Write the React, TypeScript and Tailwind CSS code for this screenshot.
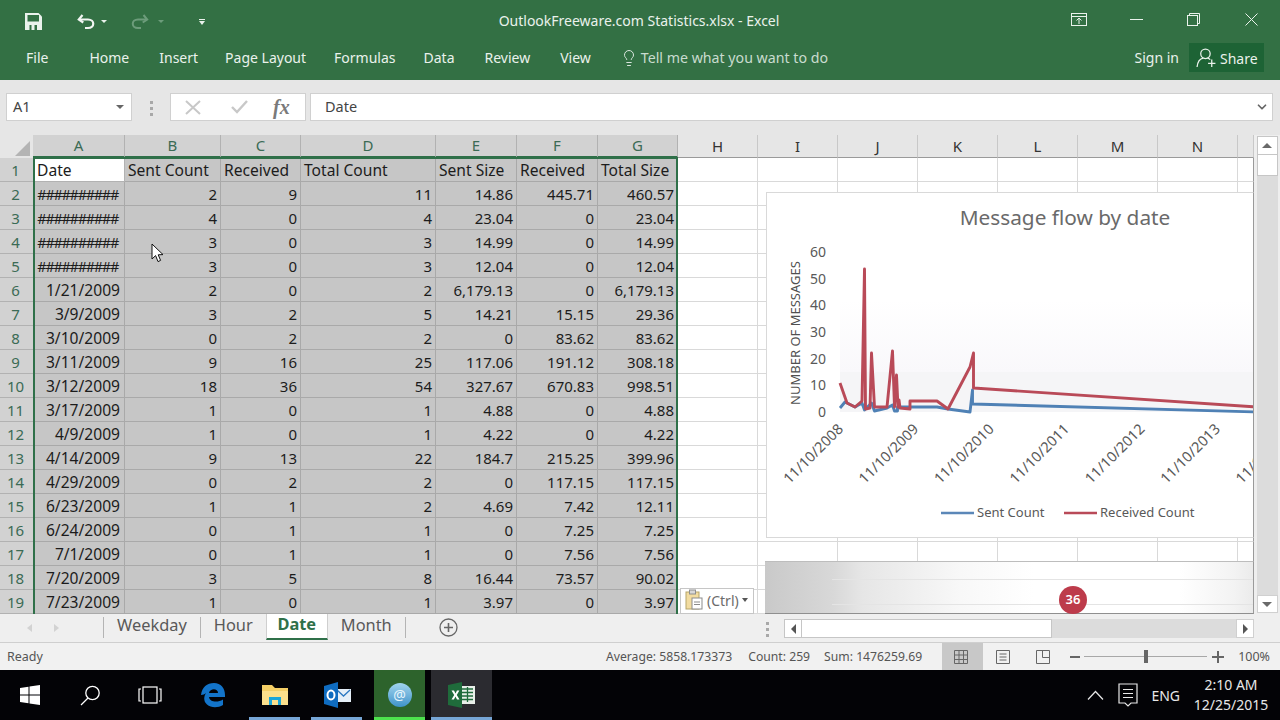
import React from "react";
import { ChevronDown, Lightbulb } from "lucide-react";

const widths = [92, 96, 80, 135, 81, 81, 80, 80, 80, 80, 80, 80, 80, 80, 16];
const letters = ["A", "B", "C", "D", "E", "F", "G", "H", "I", "J", "K", "L", "M", "N", ""];
const H = "##########";
const rows: string[][] = [
  ["Date", "Sent Count", "Received", "Total Count", "Sent Size", "Received", "Total Size"],
  [H, "2", "9", "11", "14.86", "445.71", "460.57"],
  [H, "4", "0", "4", "23.04", "0", "23.04"],
  [H, "3", "0", "3", "14.99", "0", "14.99"],
  [H, "3", "0", "3", "12.04", "0", "12.04"],
  ["1/21/2009", "2", "0", "2", "6,179.13", "0", "6,179.13"],
  ["3/9/2009", "3", "2", "5", "14.21", "15.15", "29.36"],
  ["3/10/2009", "0", "2", "2", "0", "83.62", "83.62"],
  ["3/11/2009", "9", "16", "25", "117.06", "191.12", "308.18"],
  ["3/12/2009", "18", "36", "54", "327.67", "670.83", "998.51"],
  ["3/17/2009", "1", "0", "1", "4.88", "0", "4.88"],
  ["4/9/2009", "1", "0", "1", "4.22", "0", "4.22"],
  ["4/14/2009", "9", "13", "22", "184.7", "215.25", "399.96"],
  ["4/29/2009", "0", "2", "2", "0", "117.15", "117.15"],
  ["6/23/2009", "1", "1", "2", "4.69", "7.42", "12.11"],
  ["6/24/2009", "0", "1", "1", "0", "7.25", "7.25"],
  ["7/1/2009", "0", "1", "1", "0", "7.56", "7.56"],
  ["7/20/2009", "3", "5", "8", "16.44", "73.57", "90.02"],
  ["7/23/2009", "1", "0", "1", "3.97", "0", "3.97"],
];

const red = "840,383 847,403 855,407 862,401 864.5,269 865.5,409 870,408 871.5,353 874.5,407 887,407 892.5,351 894.5,407 896.5,375 898,407 899,400 900,408 910,409 910,401 937,401 948,409 970,367 973.5,353 973.5,388 1256,407";
const blue = "840,408 845,402 855,407 862,403 864.5,410 871.5,403 874.5,411 887,408 892.5,405 894.5,411 897.5,411 897.5,407 910,407 937,407 948,409 970,412 972.5,390 972.5,404 1256,412";

function Header() {
  return (
    <div className="flex h-[23px] bg-[#e6e6e6]">
      <div className="w-[33px] shrink-0 flex items-end justify-end pr-[3px] pb-[2px] bg-[#e6e6e6]">
        <div className="w-[15px] h-[15px] bg-[#b4b4b4] [clip-path:polygon(100%_0,100%_100%,0_100%)]" />
      </div>
      {letters.map((l, i) => (
        <div
          key={i}
          style={{ width: widths[i] }}
          className={`shrink-0 flex items-center justify-center text-[15px] border-r ${
            i < 7 ? "bg-[#d2d2d2] border-[#b2b2b2] text-[#3b6b55] border-b-2 border-b-[#2f7049]" : "border-[#c8c8c8] border-b border-b-[#9a9a9a] text-[#333333]"
          }`}
        >
          {l}
        </div>
      ))}
    </div>
  );
}

function Row({ index, data }: { index: number; data: string[] }) {
  return (
    <div className="flex h-6">
      <div className="w-[33px] shrink-0 bg-[#d2d2d2] border-b border-[#b2b2b2] text-[#3b6b55] text-[15px] flex items-center justify-center pr-[2px] pt-px">
        {index + 1}
      </div>
      {widths.map((w, i) => {
        const sel = i < 7;
        const v = data[i];
        const left = index === 0;
        const big = left || i === 0;
        return (
          <div
            key={i}
            style={{ width: w }}
            className={`shrink-0 flex items-center overflow-hidden whitespace-nowrap text-[#1c1c1c] border-r border-b ${
              big ? "text-[15.6px] pt-[2px]" : "text-[15px] pt-px"
            } ${left ? "justify-start pl-[3px]" : i === 0 ? "justify-end pr-[4px]" : "justify-end pr-[3px]"} ${
              sel
                ? index === 0 && i === 0
                  ? "bg-white border-[#b2b2b2] pl-[4px]"
                  : "bg-[#c6c6c6] border-[#a9a9a9]"
                : i === 14
                  ? "bg-white border-b-[#d9d9d9] border-r-[#9a9a9a]"
                  : "bg-white border-[#d9d9d9]"
            }`}
          >
            {v === H ? <span className="text-[14.5px] tracking-[-1.3px] pr-[2px]">{v}</span> : v}
          </div>
        );
      })}
    </div>
  );
}

function Chart() {
  const xLabels = [0, 1, 2, 3, 4, 5, 6];
  return (
    <div className="absolute left-[766px] top-[57px] w-[488px] h-[346px] bg-white border border-[#d9d9d9] border-r-[#9a9a9a] overflow-hidden">
      <svg viewBox="767 193 487 344" className="block w-[487px] h-[344px]">
        <defs>
          <linearGradient id="fade" x1="0" y1="0" x2="0" y2="1">
            <stop offset="0" stopColor="#ffffff" />
            <stop offset="1" stopColor="#f9f8fb" />
          </linearGradient>
        </defs>
        <rect x="840" y="300" width="414" height="72" fill="url(#fade)" />
        <rect x="840" y="372" width="414" height="40" fill="#f5f5f7" />
        <text x="1065" y="225" textAnchor="middle" fontSize="20.8" fill="#6a6a6a">Message flow by date</text>
        <text transform="translate(800 333) rotate(-90)" textAnchor="middle" fontSize="13" fill="#505050">NUMBER OF MESSAGES</text>
        {[60, 50, 40, 30, 20, 10, 0].map((v, i) => (
          <text key={v} x="826" y={257 + i * 26.67} textAnchor="end" fontSize="14" fill="#595959">{v}</text>
        ))}
        <polyline points={blue} fill="none" stroke="#4f81b5" strokeWidth="2.9" strokeLinejoin="round" />
        <polyline points={red} fill="none" stroke="#b94a58" strokeWidth="2.9" strokeLinejoin="round" />
        {xLabels.map((i) => (
          <text
            key={i}
            transform={`translate(${844 + i * 75.4} 430) rotate(-45)`}
            textAnchor="end"
            fontSize="14.5"
            fill="#595959"
          >
            11/10/{2008 + i}
          </text>
        ))}
        <line x1="941" y1="513" x2="974" y2="513" stroke="#5b87b8" strokeWidth="2.5" />
        <text x="977" y="517" fontSize="13" fill="#595959">Sent Count</text>
        <line x1="1064" y1="513" x2="1097" y2="513" stroke="#b94a58" strokeWidth="2.5" />
        <text x="1100" y="517" fontSize="13" fill="#595959">Received Count</text>
      </svg>
    </div>
  );
}

function Cursor() {
  return (
    <svg className="absolute left-[151px] top-[108px]" width="14" height="21" viewBox="0 0 14 21">
      <path d="M1 1 L1 16 L4.6 12.6 L7 18.6 L9.6 17.4 L7.2 11.8 L12 11.6 Z" fill="#ffffff" stroke="#111111" strokeWidth="1" />
    </svg>
  );
}

function Grid() {
  return (
    <div className="relative h-[479px] w-[1254px] shrink-0 overflow-hidden bg-white">
      <Header />
      {rows.map((r, i) => (
        <Row key={i} index={i} data={r} />
      ))}
      <div className="absolute left-[33px] top-[22px] w-[645px] h-[460px] border-2 border-[#2f7049]" />
      <Cursor />
      <Chart />
      <div className="absolute left-[765px] top-[426px] w-[489px] h-[53px] border-t border-b border-r border-t-[#bdbdbd] border-b-[#8f8f8f] border-r-[#9a9a9a] bg-[linear-gradient(90deg,#c9c9c9_0%,#d8d8d8_14%,#e6e6e6_20%,#f8f8f8_40%,#ffffff_55%,#ffffff_85%,#f3f3f3_96%,#ebebeb_100%)] overflow-hidden">
        <div className="mt-[17px] h-[26px] ml-[67px] border-t border-b border-[#e4e4e4]" />
      </div>
      <div className="absolute left-[1059px] top-[451px] w-7 h-7 rounded-full bg-[#bd3b4b] text-white text-[13px] font-semibold flex items-center justify-center">36</div>
      <div className="absolute left-[680px] top-[453px] w-[74px] h-[26px] bg-white border border-[#c6c6c6] flex items-center pl-[4px] pb-[2px] text-[#6b6b6b] text-[14px] whitespace-nowrap">
        <svg width="19" height="22" viewBox="0 0 19 22" className="shrink-0">
          <rect x="1" y="3" width="13" height="17" fill="#f2dca0" stroke="#b5a56a" />
          <rect x="4.5" y="1" width="6" height="4" fill="#d7d7d7" stroke="#8e8e8e" />
          <rect x="7" y="9" width="10" height="11" fill="#ffffff" stroke="#8b8b8b" />
          <path d="M9 13h6M9 15.5h6" stroke="#8b8b8b" />
        </svg>
        <span className="ml-[3px]">(Ctrl)</span>
        <span className="ml-[3px] border-x-[3px] border-x-transparent border-t-[4px] border-t-[#555555]" />
      </div>
    </div>
  );
}

function VScroll() {
  return (
    <div className="w-[26px] h-[479px] bg-[#eeeeee] flex flex-col items-center pt-px">
      <div className="w-[21px] h-[19px] bg-white border border-[#c6c6c6] flex items-center justify-center">
        <span className="border-x-[5px] border-x-transparent border-b-[5px] border-b-[#6a6a6a]" />
      </div>
      <div className="w-[21px] h-[21px] bg-white border border-t-0 border-[#c6c6c6]" />
      <div className="w-[21px] flex-1 bg-[#dcdcdc]" />
      <div className="w-[21px] h-[18px] mb-px bg-white border border-[#d0d0d0] flex items-center justify-center">
        <span className="border-x-[5px] border-x-transparent border-t-[5px] border-t-[#6a6a6a]" />
      </div>
    </div>
  );
}

function TitleBar() {
  return (
    <div className="h-[80px] bg-[#337044] text-[#eaf2ec] shrink-0">
      <div className="relative h-[43px] flex items-center">
        <svg className="ml-[25px] shrink-0" width="17" height="17" viewBox="0 0 17 17">
          <path d="M0 0h13.500L17 3.500V17H0Z" fill="#eaf2ec" />
          <rect x="2.500" y="2" width="11.500" height="6.500" fill="#337044" />
          <rect x="4.500" y="12" width="2" height="5" fill="#337044" />
          <rect x="9.500" y="12" width="2.500" height="5" fill="#337044" />
        </svg>
        <svg className="ml-[35px] shrink-0" width="19" height="17" viewBox="0 0 19 17">
          <path d="M5.5 2 1.8 6.5l4.5 3" fill="none" stroke="#f2f6f3" strokeWidth="2.2" />
          <path d="M2.5 6.5H11c7 0 7 8.500 0 8.500H8" fill="none" stroke="#f2f6f3" strokeWidth="2.2" />
        </svg>
        <span className="ml-[5px] border-x-[3px] border-x-transparent border-t-[3px] border-t-[#eaf2ec]" />
        <svg className="ml-[23px] shrink-0" width="19" height="17" viewBox="0 0 19 17">
          <path d="M13.500 2l3.700 4.500-4.500 3" fill="none" stroke="#6d9c7b" strokeWidth="2" />
          <path d="M16.500 6.500H8c-7 0-7 8.500 0 8.500h3" fill="none" stroke="#6d9c7b" strokeWidth="2" />
        </svg>
        <span className="ml-[9px] border-x-[3px] border-x-transparent border-t-[3px] border-t-[#6d9c7b]" />
        <div className="ml-[35px] flex flex-col items-center gap-px">
          <span className="w-[6px] h-px bg-[#eaf2ec]" />
          <span className="border-x-[3px] border-x-transparent border-t-[4px] border-t-[#eaf2ec]" />
        </div>
        <div className="absolute left-0 right-0 top-[10px] text-center text-[14px] leading-[22px] pointer-events-none pr-[2px]">
          OutlookFreeware.com Statistics.xlsx - Excel
        </div>
        <div className="ml-auto flex items-center mb-[4px]">
          <svg className="ml-[1px]" width="16" height="13" viewBox="0 0 16 13" fill="none" stroke="#eaf2ec">
            <rect x=".5" y=".5" width="15" height="12" />
            <path d="M.5 3.500h15M8 11V5M5.500 7.500 8 5l2.500 2.500" />
          </svg>
          <span className="ml-[43px] w-[13px] h-px bg-[#eaf2ec]" />
          <svg className="ml-[44px]" width="13" height="13" viewBox="0 0 13 13" fill="none" stroke="#eaf2ec">
            <rect x=".5" y="2.500" width="10" height="10" />
            <path d="M2.500 2.500V.5h10v10h-2" />
          </svg>
          <svg className="ml-[45px] mr-[22px]" width="13" height="13" viewBox="0 0 13 13" fill="none" stroke="#eaf2ec">
            <path d="M.5.5l12 12M12.500.5l-12 12" />
          </svg>
        </div>
      </div>
      <div className="h-[29px] flex items-center text-[14px] whitespace-nowrap">
        <span className="ml-[26px]">File</span>
        <span className="ml-[41px]">Home</span>
        <span className="ml-[30px]">Insert</span>
        <span className="ml-[27px]">Page Layout</span>
        <span className="ml-[28px]">Formulas</span>
        <span className="ml-[28px]">Data</span>
        <span className="ml-[30px]">Review</span>
        <span className="ml-[30px]">View</span>
        <Lightbulb className="ml-[29px] shrink-0 text-[#dfe9e2]" size={18} strokeWidth={1.3} />
        <span className="ml-[3px] text-[#c9dccf] text-[14.2px]">Tell me what you want to do</span>
        <span className="ml-auto">Sign in</span>
        <div className="ml-[10px] mr-[16px] w-[75px] h-[29px] bg-[#1d6335] flex items-center pl-[7px]">
          <svg width="21" height="21" viewBox="0 0 20 20" fill="none" stroke="#eaf2ec" strokeWidth="1.2" className="shrink-0">
            <circle cx="9" cy="6.500" r="4.500" />
            <path d="M1 19c.5-5 3-8 6-8.500M11 10.500c1 .3 2 .8 2.500 1.500M15 12v7M11.500 15.500h7" />
          </svg>
          <span className="ml-[3px] mt-[2px]">Share</span>
        </div>
      </div>
    </div>
  );
}

function FormulaBar() {
  return (
    <div className="h-[55px] bg-[#e6e6e6] flex items-start pt-[13px] shrink-0">
      <div className="ml-[6px] w-[126px] h-[28px] bg-white border border-[#d0d0d0] flex items-center pl-[6px] pr-[7px] text-[14.500px] text-[#444444]">
        A1
        <span className="ml-auto border-x-[4px] border-x-transparent border-t-[4px] border-t-[#666666]" />
      </div>
      <div className="ml-[18px] mt-[8px] flex flex-col gap-[3px]">
        {[0, 1, 2].map((i) => (
          <span key={i} className="w-[3px] h-[3px] bg-[#a8a8a8]" />
        ))}
      </div>
      <div className="ml-[17px] w-[136px] h-[28px] bg-white border border-[#d0d0d0] flex items-center">
        <svg className="ml-[14px]" width="16" height="15" viewBox="0 0 16 15" fill="none" stroke="#c8c8c8" strokeWidth="2">
          <path d="M1 1l14 13M15 1 1 14" />
        </svg>
        <svg className="ml-[30px]" width="17" height="14" viewBox="0 0 17 14" fill="none" stroke="#c8c8c8" strokeWidth="2.400">
          <path d="M1 7l5 5L16 1" />
        </svg>
        <span className="ml-[25px] font-['Liberation_Serif',serif] italic font-bold text-[20px] text-[#7a7a7a] leading-none">fx</span>
      </div>
      <div className="ml-[4px] w-[963px] h-[28px] bg-white border border-[#d0d0d0] flex items-center pl-[14px] pr-[3px] text-[14.500px] text-[#444444]">
        Date
        <ChevronDown className="ml-auto text-[#666666]" size={14} strokeWidth={3} />
      </div>
    </div>
  );
}

function TabsBar() {
  const tab = "h-[26px] px-[13px] pb-[4px] flex items-center text-[16.400px] text-[#595959]";
  const sep = "w-px h-[21px] bg-[#b4b4b4]";
  return (
    <div className="h-[29px] bg-[#efefef] border-b border-[#cfcfcf] flex items-start shrink-0">
      <span className="ml-[27px] mt-[10px] border-y-[4px] border-y-transparent border-r-[5px] border-r-[#d2d2d2]" />
      <span className="ml-[22px] mt-[10px] border-y-[4px] border-y-transparent border-l-[5px] border-l-[#d2d2d2]" />
      <span className={`ml-[44px] mt-[3px] ${sep}`} />
      <div className={tab}>Weekday</div>
      <span className={`mt-[3px] ${sep}`} />
      <div className={tab}>Hour</div>
      <div className="h-[26px] w-[62px] pb-[3px] bg-white border-x border-b-2 border-[#cfcfcf] border-b-[#2f7049] flex items-center justify-center text-[16.400px] font-bold text-[#2f7049]">Date</div>
      <div className={tab}>Month</div>
      <span className={`mt-[3px] ${sep}`} />
      <svg className="ml-[33px] mt-[4px] shrink-0" width="19" height="19" viewBox="0 0 19 19" fill="none" stroke="#666666" strokeWidth="1.300">
        <circle cx="9.500" cy="9.500" r="8.500" />
        <path d="M9.500 5v9M5 9.500h9" strokeWidth="1.600" />
      </svg>
      <div className="ml-auto flex items-start">
        <div className="mt-[8px] mr-[15px] flex flex-col gap-[3px]">
          {[0, 1, 2].map((i) => (
            <span key={i} className="w-[3px] h-[3px] bg-[#a8a8a8]" />
          ))}
        </div>
        <div className="mt-[5px] flex h-[19px] w-[470px] bg-[#dcdcdc]">
          <div className="w-[18px] bg-white border border-[#c6c6c6] flex items-center justify-center">
            <span className="border-y-[5px] border-y-transparent border-r-[5px] border-r-[#555555]" />
          </div>
          <div className="w-[250px] bg-white border-y border-r border-[#c6c6c6]" />
          <div className="flex-1" />
          <div className="w-[18px] bg-white border border-[#d0d0d0] flex items-center justify-center">
            <span className="border-y-[5px] border-y-transparent border-l-[5px] border-l-[#555555]" />
          </div>
        </div>
        <div className="w-[26px]" />
      </div>
    </div>
  );
}

function StatusBar() {
  return (
    <div className="h-[27px] bg-[#f1f1f1] flex items-center text-[12.500px] text-[#555555] shrink-0 whitespace-nowrap">
      <span className="ml-[7px] mt-[2px]">Ready</span>
      <span className="ml-auto mt-[2px] text-[12.200px]">Average: 5858.173373</span>
      <span className="ml-[16px] mt-[2px] text-[12.200px]">Count: 259</span>
      <span className="ml-[14px] mt-[2px] text-[12.200px]">Sum: 1476259.69</span>
      <div className="ml-[20px] w-[41px] h-[27px] bg-[#c8c8c8] flex items-center justify-center pr-[3px]">
        <svg width="14" height="14" viewBox="0 0 14 14" fill="none" stroke="#666666">
          <path d="M.5.5h13v13H.5zM.5 5h13M.5 9.500h13M5 .5v13M9.500.5v13" />
        </svg>
      </div>
      <svg className="ml-[13px]" width="14" height="14" viewBox="0 0 14 14" fill="none" stroke="#666666">
        <path d="M.5.5h13v13H.5zM3.500 4h7M3.500 7h7M3.500 10h7" />
      </svg>
      <svg className="ml-[26px]" width="14" height="14" viewBox="0 0 14 14" fill="none" stroke="#666666">
        <path d="M.5.5h13v13H.5zM6.500.5v7h7" />
      </svg>
      <span className="ml-[20px] w-[10px] h-[2px] bg-[#666666]" />
      <div className="relative ml-[4px] w-[123px] h-px bg-[#a8a8a8]">
        <span className="absolute left-[60px] top-[-6px] w-[4px] h-[13px] bg-[#666666]" />
      </div>
      <svg className="ml-[5px]" width="12" height="12" viewBox="0 0 12 12" stroke="#666666" strokeWidth="2">
        <path d="M6 0v12M0 6h12" />
      </svg>
      <span className="ml-[14px] mr-[10px] mt-[2px]">100%</span>
    </div>
  );
}

function Taskbar() {
  return (
    <div className="h-[50px] bg-[#030306] flex items-stretch text-[#e8e8e8] relative shrink-0">
      <div className="w-[60px] flex items-center justify-center pb-[1px]">
        <svg width="20" height="20" viewBox="0 0 20 20" fill="#ffffff">
          <path d="M0 3l8.500-1.300V9.500H0zM9.500 1.500 20 0v9.500H9.500zM0 10.500h8.500v7.800L0 17zM9.500 10.500H20V20L9.500 18.500z" />
        </svg>
      </div>
      <div className="w-[60px] flex items-center justify-center">
        <svg width="21" height="21" viewBox="0 0 21 21" fill="none" stroke="#ffffff" strokeWidth="1.300">
          <circle cx="12.500" cy="8" r="6.700" />
          <path d="M8 13 1 20" />
        </svg>
      </div>
      <div className="w-[60px] flex items-center justify-center">
        <svg width="24" height="18" viewBox="0 0 24 18" fill="none" stroke="#ffffff" strokeWidth="1.200">
          <rect x="5" y="1" width="14" height="16" />
          <path d="M3 3H1v12h2M21 3h2v12h-2" />
        </svg>
      </div>
      <div className="w-[66px] flex items-center justify-center">
        <svg width="26" height="26" viewBox="0 0 26 26">
          <path d="M1 13C2 5 7 1 14 1c7 0 11 5 11 12v2H9c.5 5 8.500 6 14 2.500V23c-5 3-12 3-16-.5C3 19 4 14 6 11c-1 1-3 2-5 2zm8-2h9c0-5-8-5-9 0z" fill="#1374c9" />
        </svg>
      </div>
      <div className="w-[58px] flex items-center justify-center relative">
        <svg width="28" height="24" viewBox="0 0 28 24">
          <path d="M1 2h10l3 3h13v17H1z" fill="#f4cf66" />
          <path d="M1 8h26v14H1z" fill="#fbe08c" />
          <path d="M8 14h12v8H8z" fill="#19a6d9" />
          <path d="M11 17h6v5h-6z" fill="#fbe08c" />
        </svg>
        <span className="absolute bottom-0 left-[3px] w-[51px] h-[3px] bg-[#76a6d6]" />
      </div>
      <div className="w-[66px] flex items-center justify-center relative pl-[2px]">
        <svg width="28" height="26" viewBox="0 0 28 26">
          <path d="M12 7h15v13H12z" fill="#e5eff8" />
          <path d="M13 8l6.500 6L26 8" fill="none" stroke="#2a78c2" strokeWidth="1.300" />
          <path d="M0 4l14-4v26L0 22z" fill="#0f6cc0" />
          <ellipse cx="7" cy="13" rx="3.500" ry="4.500" fill="none" stroke="#ffffff" strokeWidth="2" />
        </svg>
        <span className="absolute bottom-0 left-[7px] w-[51px] h-[3px] bg-[#76a6d6]" />
      </div>
      <div className="ml-[4px] w-[51px] bg-[#2d632c] flex items-center justify-center relative">
        <div className="w-[24px] h-[24px] rounded-full bg-gradient-to-b from-[#a0d4ee] to-[#3d93c9] flex items-center justify-center text-[14px] text-[#e6f5fc] leading-none">@</div>
        <span className="absolute bottom-0 left-0 w-full h-[3px] bg-[#4de24d]" />
      </div>
      <div className="ml-[6px] w-[61px] bg-[#2b2b30] flex items-center justify-center relative">
        <svg width="28" height="26" viewBox="0 0 28 26">
          <path d="M12 4h15v18H12z" fill="#e8efe9" />
          <path d="M14 7h11M14 10.500h11M14 14h11M14 17.500h11M19.500 5v15" stroke="#1f6b3b" strokeWidth="1.300" />
          <path d="M0 3l14-3v26L0 23z" fill="#1f6b3b" />
          <path d="M3.500 8.500h2.500l1.500 3 1.500-3h2.400l-2.600 4.500 2.700 4.500H9l-1.500-3-1.600 3H3.500L6.200 13z" fill="#ffffff" />
        </svg>
        <span className="absolute bottom-0 left-0 w-full h-[3px] bg-[#76a6d6]" />
      </div>
      <div className="ml-auto flex items-center">
        <svg width="17" height="10" viewBox="0 0 17 10" fill="none" stroke="#e8e8e8" strokeWidth="1.200">
          <path d="M1 9.500 8.500 1.500 16 9.500" />
        </svg>
        <svg className="ml-[14px]" width="20" height="25" viewBox="0 0 20 25" fill="none" stroke="#e8e8e8" strokeWidth="1.200">
          <path d="M1 1h18v19h-6l-3 3-3-3H1zM5 6.500h10M5 10.500h10M5 14.500h10" />
        </svg>
        <span className="ml-[13px] text-[14px]">ENG</span>
        <div className="ml-[7px] w-[88px] mr-[5px] text-center text-[14px] leading-[20px]">
          <div>2:10 AM</div>
          <div>12/25/2015</div>
        </div>
      </div>
    </div>
  );
}

export default function App() {
  return (
    <div className="w-[1280px] h-[720px] overflow-hidden flex flex-col font-['Noto_Sans',sans-serif] bg-white">
      <TitleBar />
      <FormulaBar />
      <div className="flex shrink-0">
        <Grid />
        <VScroll />
      </div>
      <TabsBar />
      <StatusBar />
      <Taskbar />
    </div>
  );
}
